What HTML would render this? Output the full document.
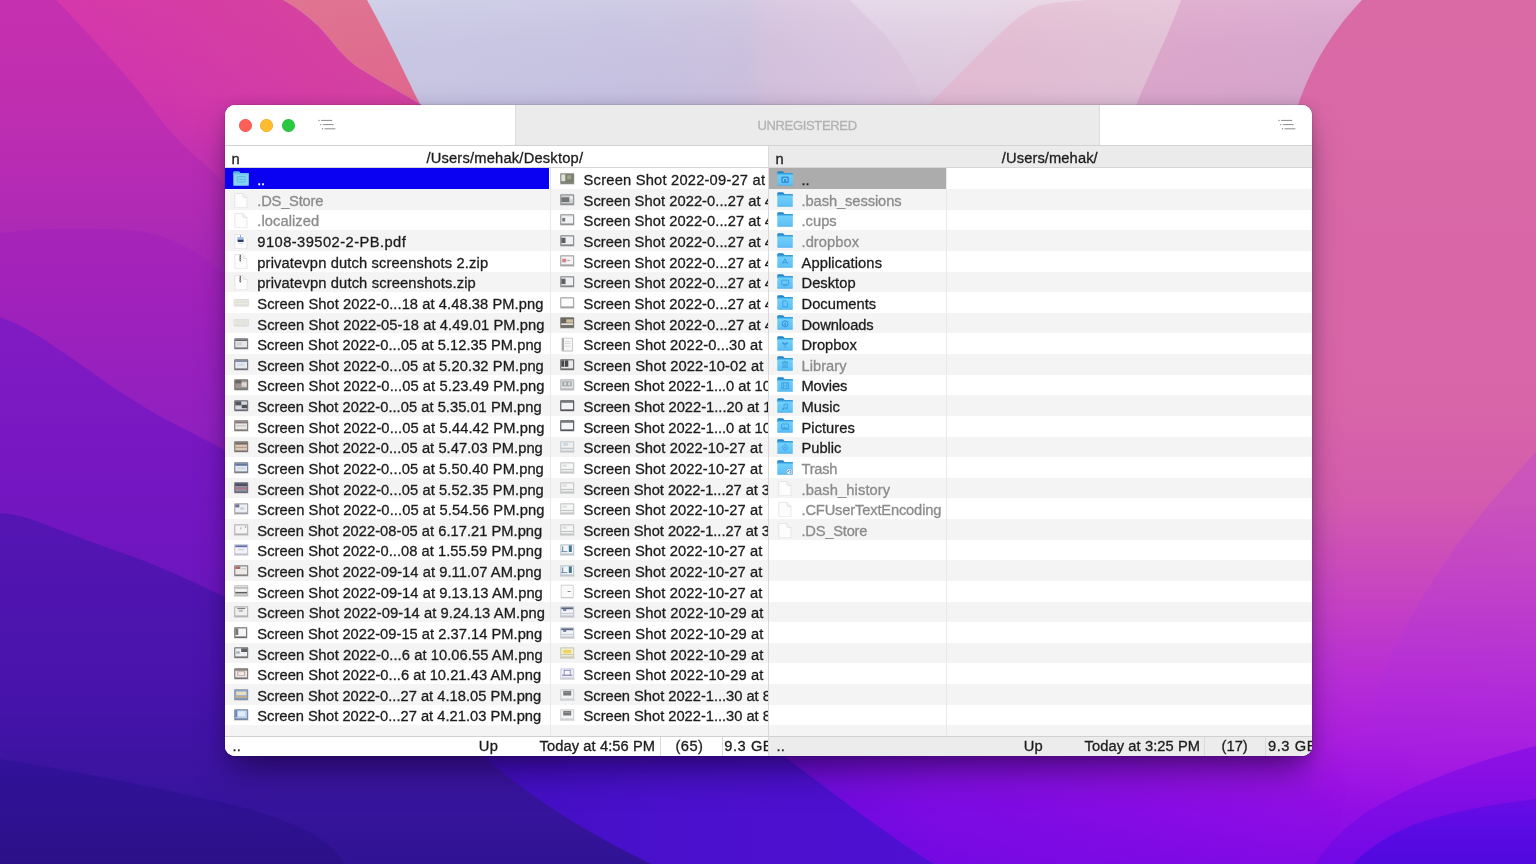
<!DOCTYPE html>
<html lang="en"><head><meta charset="utf-8"><title>Commander One</title>
<style>
html,body{margin:0;padding:0;width:1536px;height:864px;overflow:hidden;background:#7a1cc2}
body{position:relative;font-family:"Liberation Sans", "DejaVu Sans", sans-serif;font-size:14.7px;color:#1c1c1c;-webkit-font-smoothing:antialiased;-webkit-text-stroke:0.3px}
#wall{position:absolute;left:0;top:0;width:1536px;height:864px;display:block}
#win{position:absolute;left:225px;top:104.8px;width:1086.6px;height:651.4px;border-radius:10px;background:#fff;
 box-shadow:0 0 0 0.5px rgba(0,0,0,.14),0 3px 14px rgba(30,0,40,.22),0 22px 34px -8px rgba(15,0,45,.50)}
#clip{position:absolute;left:0;top:0;width:100%;height:100%;border-radius:10px;overflow:hidden;will-change:transform}
#tbar{position:absolute;left:0;top:0;width:100%;height:41px;background:#fff;border-bottom:1px solid #d2d2d2;box-sizing:border-box}
#tmid{position:absolute;left:289.5px;top:0;width:585.8px;height:40px;background:#ebebeb;border-left:1px solid #dcdcdc;border-right:1px solid #dcdcdc;box-sizing:border-box}
#ttl{position:absolute;left:0;top:-0.5px;width:100%;height:40px;line-height:41px;text-align:center;font-size:13px;color:#b2b2b2;letter-spacing:-0.33px;text-indent:-0.6px}
.tl{position:absolute;top:14px;width:13px;height:13px;border-radius:50%}
.pane{position:absolute;top:41px;height:610.4px;overflow:hidden;background:#fff}
#pl{left:0;width:542.6px}
#pr{left:544px;width:542.6px}
#pdiv{position:absolute;left:542.6px;top:41px;width:1.4px;height:610.4px;background:#d9d9d9}
.path{position:absolute;left:0;top:0;width:100%;height:22.4px;border-bottom:1px solid #d6d6d6;box-sizing:border-box;line-height:22px}
.path .n{position:absolute;left:6.6px;top:1.6px}
.path .p{position:absolute;left:17px;right:0;top:1.3px;text-align:center}
.list{position:absolute;left:0;top:-41px;width:100%;height:651.4px}
.st{position:absolute;left:0;width:100%;background:#f4f4f5}
.c{position:absolute;height:20.62px;line-height:20.62px;white-space:pre;padding-top:1.75px;box-sizing:border-box}
.d{color:#8b8b8b}
.s{color:#fff}
.ic{position:absolute;width:16px;height:15px;overflow:visible}
.col{position:absolute;top:22.4px;bottom:20.6px;overflow:hidden}
.vsep{position:absolute;top:22.4px;bottom:20.6px;width:1px;background:#e9e9e9}
.status{position:absolute;left:0;bottom:0;width:100%;height:20.8px;border-top:1px solid #d0d0d0;box-sizing:border-box;line-height:19px;white-space:pre}
.status span{position:absolute;top:0}
.status i{position:absolute;top:0;width:1px;height:100%;background:#dadada}
</style></head><body>
<svg id="wall" width="1536" height="864" viewBox="0 0 1536 864" preserveAspectRatio="none">
<defs>
<linearGradient id="gSky" gradientUnits="userSpaceOnUse" x1="0" y1="0" x2="1536" y2="0">
 <stop offset="0.24" stop-color="#cbcbe6"/><stop offset="0.40" stop-color="#c9c6e3"/><stop offset="0.485" stop-color="#cdc4e0"/>
 <stop offset="0.50" stop-color="#d6c4de"/><stop offset="0.56" stop-color="#dcc8e0"/><stop offset="0.62" stop-color="#e0cadd"/><stop offset="0.70" stop-color="#e4c2d6"/><stop offset="0.80" stop-color="#e2b4d0"/>
</linearGradient>
<linearGradient id="gSkyV" gradientUnits="userSpaceOnUse" x1="0" y1="0" x2="0" y2="130">
 <stop offset="0" stop-color="#ffffff" stop-opacity="0.10"/><stop offset="0.6" stop-color="#8060a0" stop-opacity="0.04"/><stop offset="1" stop-color="#8060a0" stop-opacity="0.16"/>
</linearGradient>
<linearGradient id="gWedge" x1="0" y1="0" x2="0" y2="1"><stop offset="0" stop-color="#e8deec" stop-opacity="0.62"/><stop offset="0.6" stop-color="#e4d6e8" stop-opacity="0.42"/><stop offset="1" stop-color="#e0cde2" stop-opacity="0.12"/></linearGradient>
<linearGradient id="gLP" x1="0" y1="0" x2="1" y2="0.3"><stop offset="0" stop-color="#e6bcd2"/><stop offset="1" stop-color="#e4c4d8"/></linearGradient>
<linearGradient id="gMP" x1="0" y1="0" x2="1" y2="0.2"><stop offset="0" stop-color="#dfa9cb"/><stop offset="1" stop-color="#d9a6ce"/></linearGradient>
<linearGradient id="gHot" gradientUnits="userSpaceOnUse" x1="0" y1="0" x2="0" y2="864">
 <stop offset="0" stop-color="#d96aa6"/><stop offset="0.47" stop-color="#d865a8"/><stop offset="0.58" stop-color="#d45bae"/>
 <stop offset="0.68" stop-color="#c845c0"/><stop offset="0.78" stop-color="#b82ed4"/><stop offset="0.87" stop-color="#a81be0"/><stop offset="0.93" stop-color="#960fe4"/><stop offset="1" stop-color="#860be5"/>
</linearGradient>
<linearGradient id="gRidgeR" gradientUnits="userSpaceOnUse" x1="1536" y1="452" x2="1340" y2="800">
 <stop offset="0" stop-color="#b040e0" stop-opacity="0.30"/><stop offset="1" stop-color="#a020e8" stop-opacity="0.10"/>
</linearGradient>
<linearGradient id="gSalmon" x1="0" y1="0" x2="0.3" y2="1"><stop offset="0" stop-color="#df7591"/><stop offset="1" stop-color="#e0648d"/></linearGradient>
<linearGradient id="gBo" gradientUnits="userSpaceOnUse" x1="340" y1="0" x2="200" y2="150"><stop offset="0" stop-color="#d8588a" stop-opacity="0.42"/><stop offset="0.5" stop-color="#d8508c" stop-opacity="0.22"/><stop offset="1" stop-color="#d8508c" stop-opacity="0"/></linearGradient>
<linearGradient id="gB" gradientUnits="userSpaceOnUse" x1="0" y1="0" x2="0" y2="700">
 <stop offset="0" stop-color="#d537ab"/><stop offset="0.13" stop-color="#d136ac"/><stop offset="0.27" stop-color="#be30b2"/><stop offset="0.42" stop-color="#a327b9"/><stop offset="0.55" stop-color="#9022bf"/><stop offset="1" stop-color="#7a1cc2"/>
</linearGradient>
<linearGradient id="gA" gradientUnits="userSpaceOnUse" x1="0" y1="0" x2="0" y2="700">
 <stop offset="0" stop-color="#c530af"/><stop offset="0.14" stop-color="#c02eb0"/><stop offset="0.28" stop-color="#b32bb4"/><stop offset="0.42" stop-color="#a126b9"/><stop offset="0.55" stop-color="#9022bf"/><stop offset="1" stop-color="#7a1cc2"/>
</linearGradient>
<linearGradient id="gW2" gradientUnits="userSpaceOnUse" x1="0" y1="228" x2="0" y2="520"><stop offset="0" stop-color="#a824b8"/><stop offset="0.3" stop-color="#9e21bc"/><stop offset="0.65" stop-color="#9220bf"/><stop offset="1" stop-color="#841ec1"/></linearGradient>
<linearGradient id="gV" gradientUnits="userSpaceOnUse" x1="0" y1="316" x2="0" y2="620"><stop offset="0" stop-color="#821bc3"/><stop offset="0.5" stop-color="#7617c2"/><stop offset="1" stop-color="#6a15be"/></linearGradient>
<linearGradient id="gI" gradientUnits="userSpaceOnUse" x1="0" y1="513" x2="0" y2="864"><stop offset="0" stop-color="#5515b4"/><stop offset="0.5" stop-color="#4813ab"/><stop offset="0.8" stop-color="#38149e"/><stop offset="1" stop-color="#301394"/></linearGradient>
<linearGradient id="gI2" x1="0" y1="0" x2="0" y2="1"><stop offset="0" stop-color="#32129a"/><stop offset="1" stop-color="#2a1088"/></linearGradient>
<linearGradient id="gBV" gradientUnits="userSpaceOnUse" x1="470" y1="0" x2="960" y2="0"><stop offset="0" stop-color="#420fc2"/><stop offset="0.4" stop-color="#4a10cc"/><stop offset="1" stop-color="#5010d2"/></linearGradient>
<linearGradient id="gBlueOv" gradientUnits="userSpaceOnUse" x1="768" y1="0" x2="1420" y2="0">
 <stop offset="0" stop-color="#4c06d8" stop-opacity="0.62"/><stop offset="0.25" stop-color="#5e06e0" stop-opacity="0.46"/><stop offset="0.6" stop-color="#6c06e4" stop-opacity="0.32"/><stop offset="1" stop-color="#6c06e4" stop-opacity="0"/>
</linearGradient>
<linearGradient id="gCorner" x1="0" y1="0" x2="0" y2="1"><stop offset="0" stop-color="#6a0ce4"/><stop offset="0.5" stop-color="#5a0ae4"/><stop offset="1" stop-color="#5208e0"/></linearGradient>
<linearGradient id="gCorner0" x1="0" y1="0" x2="0" y2="1"><stop offset="0" stop-color="#8c10e4"/><stop offset="1" stop-color="#7008e6"/></linearGradient>
<linearGradient id="gFade" gradientUnits="userSpaceOnUse" x1="0" y1="745" x2="0" y2="810"><stop offset="0" stop-color="#fff" stop-opacity="0"/><stop offset="1" stop-color="#fff" stop-opacity="1"/></linearGradient>
<mask id="mFade" maskUnits="userSpaceOnUse" x="1300" y="730" width="200" height="140"><rect x="1300" y="730" width="200" height="140" fill="url(#gFade)"/></mask>
</defs>
<!-- sky -->
<rect width="1536" height="864" fill="url(#gSky)"/>
<path d="M850 0 C862 12 875 25 887 37 C905 60 918 85 930 112 L940 112 C962 80 985 50 1037 6 L1090 0Z" fill="url(#gWedge)"/>
<path d="M1090 0 L1190 0 L1140 130 L905 130 C935 98 962 72 985 48 C1003 30 1020 14 1037 6 C1055 2 1075 1 1090 0Z" fill="url(#gLP)"/>
<path d="M1181 0 C1170 30 1158 55 1146 82 C1140 95 1136 104 1130 130 L1420 130 L1420 0Z" fill="url(#gMP)"/>
<rect width="1536" height="130" fill="url(#gSkyV)"/>
<!-- hot pink right + bottom violet base -->
<path d="M1362 0 C1337 26 1313 60 1297 108 C1280 150 1270 200 1262 260 L1262 740 L760 740 L760 864 L1536 864 L1536 0Z" fill="url(#gHot)"/>
<path d="M1536 452 C1500 490 1476 520 1457 545 C1436 575 1418 604 1403 631 C1384 668 1366 720 1350 776 L1330 864 L1536 864Z" fill="url(#gRidgeR)"/>
<rect x="760" y="740" width="551" height="124" fill="url(#gBlueOv)"/>
<rect x="1311" y="740" width="149" height="124" fill="url(#gBlueOv)" mask="url(#mFade)"/>
<!-- salmon ridge -->
<path d="M283 0 C305 12 320 26 333 43 C345 58 355 66 367 73 C385 84 402 93 420 104 L470 140 L438 140 C430 125 424 112 420 104 C410 85 392 45 367 0Z" fill="url(#gSalmon)"/>
<!-- bright magenta B -->
<path d="M0 0 L283 0 C305 12 320 26 333 43 C345 58 355 66 367 73 C385 84 402 93 420 104 L470 140 L520 200 L520 700 L0 700Z" fill="url(#gB)"/>
<path d="M0 0 L283 0 C305 12 320 26 333 43 C345 58 355 66 367 73 C385 84 402 93 420 104 L470 140 L470 260 L0 260Z" fill="url(#gBo)"/>
<!-- darker magenta A -->
<path d="M0 0 L56 0 C68 12 79 24 90 36 C100 47 110 58 120 69 C129 79 137 89 145 99 C153 110 161 120 169 130 C177 139 185 147 193 154 C201 161 209 168 217 175 C222 181 226 188 230 196 L300 260 L300 700 L0 700Z" fill="url(#gA)"/>
<!-- faint wave -->
<path d="M0 233 C28 229 56 228 83 228.5 C103 229 122 229 139 231 C154 233 168 238 180 244 C196 252 210 262 222 272 L260 300 L260 520 L0 520Z" fill="url(#gW2)"/>
<!-- violet -->
<path d="M0 317 C20 324 38 335 55 347 C75 360 93 373 111 386 C130 398 148 410 167 420 C186 430 206 440 225 450 L300 480 L300 700 L0 700Z" fill="url(#gV)"/>
<!-- indigo -->
<path d="M0 513 C18 514 34 520 49 526 C85 540 115 550 147 562 C175 573 200 585 225 597 L500 700 L700 864 L0 864Z" fill="url(#gI)"/>
<!-- bottom band -->
<path d="M476 750 C520 790 580 830 651 864 L960 864 L960 750Z" fill="url(#gBV)"/>
<path d="M776 750 C830 790 880 830 934 864 L1000 864 L1000 750Z" fill="url(#gHot)"/>
<path d="M776 750 C830 790 880 830 934 864 L1000 864 L1000 750Z" fill="url(#gBlueOv)"/>
<!-- darker indigo bottom-left -->
<path d="M0 759 C60 768 140 784 225 803 C262 812 290 822 310 832 C326 842 338 852 345 864 L0 864Z" fill="url(#gI2)"/>
<!-- bottom right corner -->
<path d="M1536 746 C1495 756 1460 768 1431 780 C1405 790 1388 800 1368 811 C1345 826 1328 844 1315 864 L1536 864Z" fill="url(#gCorner0)" opacity="0.9"/>
<path d="M1536 799 C1490 804 1450 812 1415 824 C1390 834 1368 848 1353 864 L1536 864Z" fill="url(#gCorner)"/>
</svg>

<svg width="0" height="0" style="position:absolute"><defs><linearGradient id="fg" x1="0" y1="0" x2="0" y2="1"><stop offset="0" stop-color="#72d2fc"/><stop offset="0.85" stop-color="#5fc1f6"/><stop offset="1" stop-color="#4daeea"/></linearGradient><symbol id="i-f" viewBox="0 0 16 15"><path d="M0.3 1.2 Q0.3 0.2 1.3 0.2 H5.6 Q6.3 0.2 6.8 0.9 L7.6 2.1 H14.9 Q15.8 2.1 15.8 3 V4 H0.3Z" fill="#1f86c8"/><path d="M0.3 2.6 H15.8 V13.9 Q15.8 14.8 14.9 14.8 H1.2 Q0.3 14.8 0.3 13.9Z" fill="url(#fg)"/><rect x="0.3" y="2.4" width="15.5" height="1.0" fill="#2c93d5"/></symbol><symbol id="i-up" viewBox="0 0 16 15"><path d="M0.3 1.2 Q0.3 0.2 1.3 0.2 H5.6 Q6.3 0.2 6.8 0.9 L7.6 2.1 H14.9 Q15.8 2.1 15.8 3 V4 H0.3Z" fill="#5ab4e6"/><path d="M0.3 2.6 H15.8 V13.9 Q15.8 14.8 14.9 14.8 H1.2 Q0.3 14.8 0.3 13.9Z" fill="#86d4f2"/><rect x="0.3" y="2.4" width="15.5" height="1.0" fill="#63bce9"/><rect x="4.2" y="5.6" width="7.8" height="5.4" rx="0.8" fill="none" stroke="#5cb3e2" stroke-width="1"/><rect x="5.6" y="8" width="4.8" height="1" fill="#5cb3e2"/></symbol><symbol id="i-fhome" viewBox="0 0 16 15"><path d="M0.3 1.2 Q0.3 0.2 1.3 0.2 H5.6 Q6.3 0.2 6.8 0.9 L7.6 2.1 H14.9 Q15.8 2.1 15.8 3 V4 H0.3Z" fill="#1f86c8"/><path d="M0.3 2.6 H15.8 V13.9 Q15.8 14.8 14.9 14.8 H1.2 Q0.3 14.8 0.3 13.9Z" fill="url(#fg)"/><rect x="0.3" y="2.4" width="15.5" height="1.0" fill="#2c93d5"/><rect x="4.4" y="5.4" width="7.4" height="6.6" rx="1" fill="#2f8fdb"/><path d="M6.3 10.6 V8.2 Q8.1 6.4 9.9 8.2 V10.6" fill="none" stroke="#8ad4fa" stroke-width="1.1"/></symbol><symbol id="i-fA" viewBox="0 0 16 15"><path d="M0.3 1.2 Q0.3 0.2 1.3 0.2 H5.6 Q6.3 0.2 6.8 0.9 L7.6 2.1 H14.9 Q15.8 2.1 15.8 3 V4 H0.3Z" fill="#1f86c8"/><path d="M0.3 2.6 H15.8 V13.9 Q15.8 14.8 14.9 14.8 H1.2 Q0.3 14.8 0.3 13.9Z" fill="url(#fg)"/><rect x="0.3" y="2.4" width="15.5" height="1.0" fill="#2c93d5"/><path d="M8 5.8 L5.4 11 M8 5.8 L10.6 11 M5.6 9.6 H10.4" stroke="#3a9ee0" stroke-width="1" fill="none"/></symbol><symbol id="i-fD" viewBox="0 0 16 15"><path d="M0.3 1.2 Q0.3 0.2 1.3 0.2 H5.6 Q6.3 0.2 6.8 0.9 L7.6 2.1 H14.9 Q15.8 2.1 15.8 3 V4 H0.3Z" fill="#1f86c8"/><path d="M0.3 2.6 H15.8 V13.9 Q15.8 14.8 14.9 14.8 H1.2 Q0.3 14.8 0.3 13.9Z" fill="url(#fg)"/><rect x="0.3" y="2.4" width="15.5" height="1.0" fill="#2c93d5"/><rect x="4.6" y="6.2" width="7" height="4.4" rx="0.6" fill="none" stroke="#3a9ee0" stroke-width="0.9"/><rect x="6" y="11.3" width="4.2" height="0.8" fill="#3a9ee0"/></symbol><symbol id="i-fDoc" viewBox="0 0 16 15"><path d="M0.3 1.2 Q0.3 0.2 1.3 0.2 H5.6 Q6.3 0.2 6.8 0.9 L7.6 2.1 H14.9 Q15.8 2.1 15.8 3 V4 H0.3Z" fill="#1f86c8"/><path d="M0.3 2.6 H15.8 V13.9 Q15.8 14.8 14.9 14.8 H1.2 Q0.3 14.8 0.3 13.9Z" fill="url(#fg)"/><rect x="0.3" y="2.4" width="15.5" height="1.0" fill="#2c93d5"/><path d="M5.8 5.8 H9 L10.6 7.4 V11.8 H5.8Z" fill="none" stroke="#3a9ee0" stroke-width="0.9"/></symbol><symbol id="i-fDl" viewBox="0 0 16 15"><path d="M0.3 1.2 Q0.3 0.2 1.3 0.2 H5.6 Q6.3 0.2 6.8 0.9 L7.6 2.1 H14.9 Q15.8 2.1 15.8 3 V4 H0.3Z" fill="#1f86c8"/><path d="M0.3 2.6 H15.8 V13.9 Q15.8 14.8 14.9 14.8 H1.2 Q0.3 14.8 0.3 13.9Z" fill="url(#fg)"/><rect x="0.3" y="2.4" width="15.5" height="1.0" fill="#2c93d5"/><circle cx="8.1" cy="8.8" r="3" fill="none" stroke="#2f8fdb" stroke-width="1"/><path d="M8.1 7.2 V10.2 M6.9 9.2 L8.1 10.4 L9.3 9.2" stroke="#2f8fdb" stroke-width="0.9" fill="none"/></symbol><symbol id="i-fDb" viewBox="0 0 16 15"><path d="M0.3 1.2 Q0.3 0.2 1.3 0.2 H5.6 Q6.3 0.2 6.8 0.9 L7.6 2.1 H14.9 Q15.8 2.1 15.8 3 V4 H0.3Z" fill="#1f86c8"/><path d="M0.3 2.6 H15.8 V13.9 Q15.8 14.8 14.9 14.8 H1.2 Q0.3 14.8 0.3 13.9Z" fill="url(#fg)"/><rect x="0.3" y="2.4" width="15.5" height="1.0" fill="#2c93d5"/><path d="M6.2 6 L8.1 7.2 L10 6 L11.6 7.2 L8.1 9.6 L4.6 7.2Z M6.4 10.4 L8.1 11.6 L9.8 10.4" fill="#3a9ee0" stroke="none"/></symbol><symbol id="i-fL" viewBox="0 0 16 15"><path d="M0.3 1.2 Q0.3 0.2 1.3 0.2 H5.6 Q6.3 0.2 6.8 0.9 L7.6 2.1 H14.9 Q15.8 2.1 15.8 3 V4 H0.3Z" fill="#1f86c8"/><path d="M0.3 2.6 H15.8 V13.9 Q15.8 14.8 14.9 14.8 H1.2 Q0.3 14.8 0.3 13.9Z" fill="url(#fg)"/><rect x="0.3" y="2.4" width="15.5" height="1.0" fill="#2c93d5"/><path d="M5 11.6 H11.2 M5.6 10.2 H10.6 M6 7 V10 M8.1 7 V10 M10.2 7 V10 M5 6.6 L8.1 5.2 L11.2 6.6Z" stroke="#3a9ee0" stroke-width="0.8" fill="none"/></symbol><symbol id="i-fM" viewBox="0 0 16 15"><path d="M0.3 1.2 Q0.3 0.2 1.3 0.2 H5.6 Q6.3 0.2 6.8 0.9 L7.6 2.1 H14.9 Q15.8 2.1 15.8 3 V4 H0.3Z" fill="#1f86c8"/><path d="M0.3 2.6 H15.8 V13.9 Q15.8 14.8 14.9 14.8 H1.2 Q0.3 14.8 0.3 13.9Z" fill="url(#fg)"/><rect x="0.3" y="2.4" width="15.5" height="1.0" fill="#2c93d5"/><rect x="4.8" y="5.8" width="6.6" height="6" fill="none" stroke="#3a9ee0" stroke-width="0.9"/><path d="M6.4 5.8 V11.8 M9.8 5.8 V11.8 M6.4 8.8 H9.8" stroke="#3a9ee0" stroke-width="0.8"/></symbol><symbol id="i-fMu" viewBox="0 0 16 15"><path d="M0.3 1.2 Q0.3 0.2 1.3 0.2 H5.6 Q6.3 0.2 6.8 0.9 L7.6 2.1 H14.9 Q15.8 2.1 15.8 3 V4 H0.3Z" fill="#1f86c8"/><path d="M0.3 2.6 H15.8 V13.9 Q15.8 14.8 14.9 14.8 H1.2 Q0.3 14.8 0.3 13.9Z" fill="url(#fg)"/><rect x="0.3" y="2.4" width="15.5" height="1.0" fill="#2c93d5"/><path d="M7 11 V6.4 L10.4 5.8 V10.2" fill="none" stroke="#3a9ee0" stroke-width="0.9"/><circle cx="6.2" cy="11" r="1.1" fill="#3a9ee0"/><circle cx="9.6" cy="10.3" r="1.1" fill="#3a9ee0"/></symbol><symbol id="i-fP" viewBox="0 0 16 15"><path d="M0.3 1.2 Q0.3 0.2 1.3 0.2 H5.6 Q6.3 0.2 6.8 0.9 L7.6 2.1 H14.9 Q15.8 2.1 15.8 3 V4 H0.3Z" fill="#1f86c8"/><path d="M0.3 2.6 H15.8 V13.9 Q15.8 14.8 14.9 14.8 H1.2 Q0.3 14.8 0.3 13.9Z" fill="url(#fg)"/><rect x="0.3" y="2.4" width="15.5" height="1.0" fill="#2c93d5"/><rect x="4.6" y="6" width="7" height="5.4" rx="0.6" fill="none" stroke="#3a9ee0" stroke-width="0.9"/><path d="M5 10.8 L7.2 8.4 L8.8 10 L9.8 9.2 L11.2 10.8Z" fill="#3a9ee0"/></symbol><symbol id="i-fPu" viewBox="0 0 16 15"><path d="M0.3 1.2 Q0.3 0.2 1.3 0.2 H5.6 Q6.3 0.2 6.8 0.9 L7.6 2.1 H14.9 Q15.8 2.1 15.8 3 V4 H0.3Z" fill="#1f86c8"/><path d="M0.3 2.6 H15.8 V13.9 Q15.8 14.8 14.9 14.8 H1.2 Q0.3 14.8 0.3 13.9Z" fill="url(#fg)"/><rect x="0.3" y="2.4" width="15.5" height="1.0" fill="#2c93d5"/><path d="M8.1 5.4 L11 8.6 L8.1 11.8 L5.2 8.6Z" fill="none" stroke="#3a9ee0" stroke-width="0.9"/><circle cx="8.1" cy="8.6" r="0.9" fill="#3a9ee0"/></symbol><symbol id="i-fT" viewBox="0 0 16 15"><path d="M0.3 1.2 Q0.3 0.2 1.3 0.2 H5.6 Q6.3 0.2 6.8 0.9 L7.6 2.1 H14.9 Q15.8 2.1 15.8 3 V4 H0.3Z" fill="#1f86c8"/><path d="M0.3 2.6 H15.8 V13.9 Q15.8 14.8 14.9 14.8 H1.2 Q0.3 14.8 0.3 13.9Z" fill="url(#fg)"/><rect x="0.3" y="2.4" width="15.5" height="1.0" fill="#2c93d5"/><circle cx="12.4" cy="11.6" r="3.1" fill="#f3f6fa" stroke="#2f8fdb" stroke-width="0.5"/><path d="M11 11.6 a1.5 1.5 0 1 1 1.5 1.5" fill="none" stroke="#4a7fb5" stroke-width="0.9"/><path d="M10.2 11 L11 12.2 L11.9 11Z" fill="#4a7fb5"/></symbol><symbol id="i-doc" viewBox="0 0 16 15"><path d="M1.8 0.5 H10 L14 4.5 V14.1 Q14 14.8 13.3 14.8 H2.5 Q1.8 14.8 1.8 14.1Z" fill="#fdfdfd" stroke="#dedede" stroke-width="0.7"/><path d="M10 0.5 V3.7 Q10 4.5 10.8 4.5 H14" fill="#f1f1f1" stroke="#d9d9d9" stroke-width="0.6"/></symbol><symbol id="i-pdf" viewBox="0 0 16 15"><path d="M1.8 0.5 H10 L14 4.5 V14.1 Q14 14.8 13.3 14.8 H2.5 Q1.8 14.8 1.8 14.1Z" fill="#fdfdfd" stroke="#dcdcdc" stroke-width="0.7"/><rect x="4.2" y="3" width="6.6" height="2.6" fill="#9fc0ea"/><rect x="4.6" y="5.6" width="6" height="2.4" fill="#2c3d66"/><rect x="7" y="1.2" width="1" height="2" fill="#7a9fd8"/><rect x="5" y="9" width="5" height="0.8" fill="#cfd6e4"/></symbol><symbol id="i-zip" viewBox="0 0 16 15"><path d="M1.8 0.5 H10 L14 4.5 V14.1 Q14 14.8 13.3 14.8 H2.5 Q1.8 14.8 1.8 14.1Z" fill="#fdfdfd" stroke="#dcdcdc" stroke-width="0.7"/><path d="M10 0.5 V3.7 Q10 4.5 10.8 4.5 H14" fill="#f1f1f1" stroke="#d9d9d9" stroke-width="0.6"/><rect x="6.6" y="0.8" width="1.4" height="6.6" fill="#6d6d6d"/><rect x="6.3" y="3" width="2" height="1" fill="#9a9a9a"/><rect x="6.3" y="5" width="2" height="1" fill="#9a9a9a"/></symbol><symbol id="i-t0" viewBox="0 0 16 15"><rect x="0.6" y="3.0" width="15.2" height="7.4" fill="#d3d3d1" rx="1"/><rect x="1.1" y="3.5" width="14.2" height="6" fill="#ecebe6"/><rect x="1.8" y="4.6" width="12.8" height="0.7" fill="#dad8d0"/><rect x="1.8" y="6.4" width="12.8" height="0.7" fill="#dad8d0"/><rect x="1.8" y="8.0" width="12.8" height="0.6" fill="#dcdad2"/></symbol><symbol id="i-t1" viewBox="0 0 16 15"><g opacity="0.82"><rect x="0.7999999999999999" y="11.3" width="14.8" height="1.4" fill="#c9c9c9" rx="0.5"/><rect x="1.2" y="1.3" width="14" height="10.6" fill="#5a5a5c" rx="0.8"/><rect x="2.3" y="2.4000000000000004" width="11.8" height="8.0" fill="#dfe1e6"/><rect x="2.3" y="2.4000000000000004" width="11.8" height="1.6" fill="#3e4046"/><rect x="3.7" y="5.3" width="5" height="3" fill="#c3c7d0"/></g></symbol><symbol id="i-t2" viewBox="0 0 16 15"><g opacity="0.82"><rect x="0.7999999999999999" y="11.3" width="14.8" height="1.4" fill="#c9c9c9" rx="0.5"/><rect x="1.2" y="1.3" width="14" height="10.6" fill="#50545c" rx="0.8"/><rect x="2.3" y="2.4000000000000004" width="11.8" height="8.0" fill="#e4e8f0"/><rect x="2.3" y="2.4000000000000004" width="11.8" height="1.4" fill="#4a5a7a"/><rect x="4.2" y="5.3" width="7" height="2.6" fill="#cfd6e2"/></g></symbol><symbol id="i-t3" viewBox="0 0 16 15"><g opacity="0.82"><rect x="0.7999999999999999" y="11.3" width="14.8" height="1.4" fill="#c9c9c9" rx="0.5"/><rect x="1.2" y="1.3" width="14" height="10.6" fill="#5a5656" rx="0.8"/><rect x="2.3" y="2.4000000000000004" width="11.8" height="8.0" fill="#8a7f7c"/><rect x="2.3" y="2.4000000000000004" width="6" height="3" fill="#4a4444"/><rect x="8.7" y="4.3" width="5" height="4.5" fill="#d8d0cc"/></g></symbol><symbol id="i-t4" viewBox="0 0 16 15"><g opacity="0.82"><rect x="0.7999999999999999" y="11.3" width="14.8" height="1.4" fill="#c9c9c9" rx="0.5"/><rect x="1.2" y="1.3" width="14" height="10.6" fill="#4c4e54" rx="0.8"/><rect x="2.3" y="2.4000000000000004" width="11.8" height="8.0" fill="#cfd4dc"/><rect x="2.3" y="2.4000000000000004" width="6" height="4" fill="#30343c"/><rect x="8.7" y="5.8" width="5.4" height="3.4" fill="#2c3038"/></g></symbol><symbol id="i-t5" viewBox="0 0 16 15"><g opacity="0.82"><rect x="0.7999999999999999" y="11.3" width="14.8" height="1.4" fill="#c9c9c9" rx="0.5"/><rect x="1.2" y="1.3" width="14" height="10.6" fill="#5c5858" rx="0.8"/><rect x="2.3" y="2.4000000000000004" width="11.8" height="8.0" fill="#e6e2e0"/><rect x="2.3" y="2.4000000000000004" width="11.8" height="2" fill="#6a5a58"/><rect x="3.2" y="6.3" width="10" height="1" fill="#b9aeaa"/></g></symbol><symbol id="i-t6" viewBox="0 0 16 15"><g opacity="0.82"><rect x="0.7999999999999999" y="11.3" width="14.8" height="1.4" fill="#c9c9c9" rx="0.5"/><rect x="1.2" y="1.3" width="14" height="10.6" fill="#5e5650" rx="0.8"/><rect x="2.3" y="2.4000000000000004" width="11.8" height="8.0" fill="#d9c4b0"/><rect x="2.3" y="2.4000000000000004" width="11.8" height="2.2" fill="#5a4a44"/><rect x="2.3" y="6.7" width="11.8" height="1.4" fill="#b08a6c"/></g></symbol><symbol id="i-t7" viewBox="0 0 16 15"><g opacity="0.82"><rect x="0.7999999999999999" y="11.3" width="14.8" height="1.4" fill="#c9c9c9" rx="0.5"/><rect x="1.2" y="1.3" width="14" height="10.6" fill="#5a6070" rx="0.8"/><rect x="2.3" y="2.4000000000000004" width="11.8" height="8.0" fill="#dfe6f0"/><rect x="2.3" y="2.4000000000000004" width="11.8" height="2.4" fill="#3f5a8c"/><rect x="4.2" y="6.3" width="8" height="2" fill="#c4cede"/></g></symbol><symbol id="i-t8" viewBox="0 0 16 15"><g opacity="0.82"><rect x="0.7999999999999999" y="11.3" width="14.8" height="1.4" fill="#c9c9c9" rx="0.5"/><rect x="1.2" y="1.3" width="14" height="10.6" fill="#4c4c58" rx="0.8"/><rect x="2.3" y="2.4000000000000004" width="11.8" height="8.0" fill="#7a7f98"/><rect x="2.3" y="2.4000000000000004" width="11.8" height="2.6" fill="#2a2c48"/><rect x="2.3" y="6.3" width="11.8" height="2" fill="#a05a6a"/></g></symbol><symbol id="i-t9" viewBox="0 0 16 15"><g opacity="0.82"><rect x="0.7999999999999999" y="11.3" width="14.8" height="1.4" fill="#c9c9c9" rx="0.5"/><rect x="1.2" y="1.3" width="14" height="10.6" fill="#8a8e96" rx="0.8"/><rect x="2.3" y="2.4000000000000004" width="11.8" height="8.0" fill="#e9edf2"/><rect x="2.3" y="2.4000000000000004" width="4" height="3" fill="#4a5568"/><rect x="7.2" y="5.5" width="4" height="2" fill="#b8c0cc"/></g></symbol><symbol id="i-t10" viewBox="0 0 16 15"><g opacity="0.82"><rect x="0.7999999999999999" y="11.3" width="14.8" height="1.4" fill="#c9c9c9" rx="0.5"/><rect x="1.2" y="1.3" width="14" height="10.6" fill="#a8a8aa" rx="0.8"/><rect x="2.3" y="2.4000000000000004" width="11.8" height="8.0" fill="#f4f4f4"/><rect x="7.2" y="4.3" width="1.2" height="2" fill="#9a9a9a"/><rect x="11.799999999999999" y="3.3" width="1.4" height="1.4" fill="#8a8a8a"/></g></symbol><symbol id="i-t11" viewBox="0 0 16 15"><g opacity="0.82"><rect x="0.7999999999999999" y="11.3" width="14.8" height="1.4" fill="#c9c9c9" rx="0.5"/><rect x="1.2" y="1.3" width="14" height="10.6" fill="#b4b8c4" rx="0.8"/><rect x="2.3" y="2.4000000000000004" width="11.8" height="8.0" fill="#f0f2f8"/><rect x="2.3" y="2.4000000000000004" width="11.8" height="1.8" fill="#3a4a9a"/><rect x="5.2" y="5.7" width="6" height="1.6" fill="#c8cce0"/></g></symbol><symbol id="i-t12" viewBox="0 0 16 15"><g opacity="0.82"><rect x="0.7999999999999999" y="11.3" width="14.8" height="1.4" fill="#c9c9c9" rx="0.5"/><rect x="1.2" y="1.3" width="14" height="10.6" fill="#6a6668" rx="0.8"/><rect x="2.3" y="2.4000000000000004" width="11.8" height="8.0" fill="#ece8e6"/><rect x="2.3" y="2.4000000000000004" width="5" height="2.6" fill="#a04a44"/><rect x="8.2" y="4.3" width="5" height="1" fill="#bdb6b4"/></g></symbol><symbol id="i-t13" viewBox="0 0 16 15"><g opacity="0.82"><rect x="0.7999999999999999" y="11.3" width="14.8" height="1.4" fill="#c9c9c9" rx="0.5"/><rect x="1.2" y="1.3" width="14" height="10.6" fill="#b0b0b0" rx="0.8"/><rect x="2.3" y="2.4000000000000004" width="11.8" height="8.0" fill="#f2f2f2"/><rect x="2.3" y="3.5" width="11.8" height="0.9" fill="#6a6a6a"/><rect x="2.3" y="7.8999999999999995" width="11.8" height="1.6" fill="#3c3c3c"/></g></symbol><symbol id="i-t14" viewBox="0 0 16 15"><g opacity="0.82"><rect x="0.7999999999999999" y="11.3" width="14.8" height="1.4" fill="#c9c9c9" rx="0.5"/><rect x="1.2" y="1.3" width="14" height="10.6" fill="#a4a4a6" rx="0.8"/><rect x="2.3" y="2.4000000000000004" width="11.8" height="8.0" fill="#f0f0f0"/><rect x="4.2" y="2.9000000000000004" width="8" height="1.2" fill="#6a6a6a"/><rect x="5.8" y="4.9" width="4" height="2" fill="#b0a8a4"/></g></symbol><symbol id="i-t15" viewBox="0 0 16 15"><g opacity="0.82"><rect x="0.7999999999999999" y="11.3" width="13.8" height="1.4" fill="#c9c9c9" rx="0.5"/><rect x="1.2" y="1.3" width="13" height="10.6" fill="#4e4e50" rx="0.8"/><rect x="2.3" y="2.4000000000000004" width="10.8" height="8.0" fill="#f4f4f4"/><rect x="2.3" y="2.4000000000000004" width="3" height="6.6" fill="#5a5a5c"/></g></symbol><symbol id="i-t16" viewBox="0 0 16 15"><g opacity="0.82"><rect x="0.7999999999999999" y="11.3" width="14.8" height="1.4" fill="#c9c9c9" rx="0.5"/><rect x="1.2" y="1.3" width="14" height="10.6" fill="#55575c" rx="0.8"/><rect x="2.3" y="2.4000000000000004" width="11.8" height="8.0" fill="#eceef2"/><rect x="8.2" y="2.4000000000000004" width="5.9" height="3.6" fill="#3a3c42"/><rect x="3.2" y="5.3" width="3.6" height="2.4" fill="#9aa0aa"/></g></symbol><symbol id="i-t17" viewBox="0 0 16 15"><g opacity="0.82"><rect x="0.7999999999999999" y="11.3" width="14.8" height="1.4" fill="#c9c9c9" rx="0.5"/><rect x="1.2" y="1.3" width="14" height="10.6" fill="#5c5454" rx="0.8"/><rect x="2.3" y="2.4000000000000004" width="11.8" height="8.0" fill="#e9e4e2"/><rect x="2.3" y="2.4000000000000004" width="11.8" height="1.2" fill="#4a4040"/><rect x="4.2" y="4.3" width="8" height="4.6" fill="#b89a90"/><rect x="5.4" y="5.1" width="5.6" height="3" fill="#efe8e4"/></g></symbol><symbol id="i-t18" viewBox="0 0 16 15"><g opacity="0.82"><rect x="0.7999999999999999" y="11.3" width="14.8" height="1.4" fill="#c9c9c9" rx="0.5"/><rect x="1.2" y="1.3" width="14" height="10.6" fill="#6a7890" rx="0.8"/><rect x="2.3" y="2.4000000000000004" width="11.8" height="8.0" fill="#7fa8d8"/><rect x="3.2" y="3.7" width="10" height="3.4" fill="#e8d8b0"/><rect x="2.3" y="7.8999999999999995" width="11.8" height="1.4" fill="#c89a58"/></g></symbol><symbol id="i-t19" viewBox="0 0 16 15"><g opacity="0.82"><rect x="0.7999999999999999" y="11.3" width="14.8" height="1.4" fill="#c9c9c9" rx="0.5"/><rect x="1.2" y="1.3" width="14" height="10.6" fill="#5a6a8a" rx="0.8"/><rect x="2.3" y="2.4000000000000004" width="11.8" height="8.0" fill="#a9c6ea"/><rect x="4.2" y="3.3" width="8" height="5" fill="#dbe8f8"/><rect x="2.3" y="2.4000000000000004" width="2" height="6.8" fill="#4a6aa0"/></g></symbol><symbol id="i-u0" viewBox="0 0 16 15"><g opacity="0.82"><rect x="0.7999999999999999" y="11.3" width="14.8" height="1.4" fill="#c9c9c9" rx="0.5"/><rect x="1.2" y="1.3" width="14" height="10.6" fill="#6a6e64" rx="0.8"/><rect x="2.3" y="2.4000000000000004" width="11.8" height="8.0" fill="#5f6450"/><rect x="2.3" y="2.4000000000000004" width="4" height="6.8" fill="#d8dad0"/><rect x="8.2" y="3.3" width="4" height="4" fill="#8a9070"/></g></symbol><symbol id="i-u1" viewBox="0 0 16 15"><g opacity="0.82"><rect x="0.7999999999999999" y="11.3" width="14.8" height="1.4" fill="#c9c9c9" rx="0.5"/><rect x="1.2" y="1.3" width="14" height="10.6" fill="#77797a" rx="0.8"/><rect x="2.3" y="2.4000000000000004" width="11.8" height="8.0" fill="#c9cbcc"/><rect x="2.3" y="4.3" width="8" height="4.8" fill="#54585a"/><rect x="10.799999999999999" y="3.3" width="3" height="3" fill="#eeeeee"/></g></symbol><symbol id="i-u2" viewBox="0 0 16 15"><g opacity="0.82"><rect x="0.7999999999999999" y="11.3" width="14.8" height="1.4" fill="#c9c9c9" rx="0.5"/><rect x="1.2" y="1.3" width="14" height="10.6" fill="#77797c" rx="0.8"/><rect x="2.3" y="2.4000000000000004" width="11.8" height="8.0" fill="#f1f2f4"/><rect x="3.2" y="4.9" width="3" height="3.6" fill="#5a5e66"/><rect x="2.3" y="2.4000000000000004" width="11.8" height="0.8" fill="#b9bcc2"/></g></symbol><symbol id="i-u3" viewBox="0 0 16 15"><g opacity="0.82"><rect x="0.7999999999999999" y="11.3" width="14.8" height="1.4" fill="#c9c9c9" rx="0.5"/><rect x="1.2" y="1.3" width="14" height="10.6" fill="#6c6e72" rx="0.8"/><rect x="2.3" y="2.4000000000000004" width="11.8" height="8.0" fill="#eef0f2"/><rect x="2.3" y="3.7" width="4.2" height="5.4" fill="#3c3f46"/></g></symbol><symbol id="i-u4" viewBox="0 0 16 15"><g opacity="0.82"><rect x="0.7999999999999999" y="11.3" width="14.8" height="1.4" fill="#c9c9c9" rx="0.5"/><rect x="1.2" y="1.3" width="14" height="10.6" fill="#8a8c90" rx="0.8"/><rect x="2.3" y="2.4000000000000004" width="11.8" height="8.0" fill="#f4f2f2"/><rect x="3.2" y="4.7" width="4" height="3.6" fill="#c86a72"/><rect x="8.2" y="5.8999999999999995" width="3" height="1.2" fill="#9a9a9a"/></g></symbol><symbol id="i-u5" viewBox="0 0 16 15"><g opacity="0.82"><rect x="0.7999999999999999" y="11.3" width="14.8" height="1.4" fill="#c9c9c9" rx="0.5"/><rect x="1.2" y="1.3" width="14" height="10.6" fill="#8c8c8e" rx="0.8"/><rect x="2.3" y="2.4000000000000004" width="11.8" height="8.0" fill="#fbfbfb"/></g></symbol><symbol id="i-u6" viewBox="0 0 16 15"><g opacity="0.82"><rect x="0.7999999999999999" y="11.3" width="14.8" height="1.4" fill="#c9c9c9" rx="0.5"/><rect x="1.2" y="1.3" width="14" height="10.6" fill="#5c5a56" rx="0.8"/><rect x="2.3" y="2.4000000000000004" width="11.8" height="8.0" fill="#4a463e"/><rect x="7.2" y="3.3" width="6.8" height="3.4" fill="#c9b48a"/><rect x="2.3" y="7.3" width="11.8" height="1.8" fill="#e4e0d8"/></g></symbol><symbol id="i-u7" viewBox="0 0 16 15"><rect x="2.6" y="0.8" width="11.2" height="13.6" fill="#b8b8b8" rx="0.6"/><rect x="3.3" y="1.5" width="9.8" height="12" fill="#f7f7f7"/><rect x="3.3" y="1.5" width="1.4" height="12" fill="#8a8a8a"/><rect x="5.6" y="4" width="6" height="0.6" fill="#c4c4c4"/><rect x="5.6" y="6.4" width="6" height="0.6" fill="#c4c4c4"/><rect x="5.6" y="8.8" width="6" height="0.6" fill="#c4c4c4"/></symbol><symbol id="i-u8" viewBox="0 0 16 15"><g opacity="0.82"><rect x="0.7999999999999999" y="11.3" width="14.8" height="1.4" fill="#c9c9c9" rx="0.5"/><rect x="1.2" y="1.3" width="14" height="10.6" fill="#4a4a4c" rx="0.8"/><rect x="2.3" y="2.4000000000000004" width="11.8" height="8.0" fill="#e8e8ea"/><rect x="2.3" y="2.4000000000000004" width="7" height="6.4" fill="#222226"/><rect x="5.2" y="2.4000000000000004" width="0.8" height="6.4" fill="#d0d0d0"/></g></symbol><symbol id="i-u9" viewBox="0 0 16 15"><g opacity="0.82"><rect x="0.7999999999999999" y="11.3" width="14.8" height="1.4" fill="#c9c9c9" rx="0.5"/><rect x="1.2" y="1.3" width="14" height="10.6" fill="#a4a6a8" rx="0.8"/><rect x="2.3" y="2.4000000000000004" width="11.8" height="8.0" fill="#dcdedf"/><rect x="3.2" y="3.3" width="9.6" height="5" fill="#909496"/><rect x="5.2" y="4.3" width="2" height="3" fill="#d8dadb"/><rect x="9.2" y="4.3" width="2" height="3" fill="#d8dadb"/></g></symbol><symbol id="i-u10" viewBox="0 0 16 15"><g opacity="0.82"><rect x="0.7999999999999999" y="11.3" width="14.8" height="1.4" fill="#c9c9c9" rx="0.5"/><rect x="1.2" y="1.3" width="14" height="10.6" fill="#2c2e34" rx="0.8"/><rect x="2.3" y="2.4000000000000004" width="11.8" height="8.0" fill="#f2f3f5"/><rect x="2.3" y="2.4000000000000004" width="11.8" height="1.2" fill="#2c2e34"/></g></symbol><symbol id="i-u11" viewBox="0 0 16 15"><g opacity="0.82"><rect x="0.7999999999999999" y="11.3" width="14.8" height="1.4" fill="#c9c9c9" rx="0.5"/><rect x="1.2" y="1.3" width="14" height="10.6" fill="#bcc0c4" rx="0.8"/><rect x="2.3" y="2.4000000000000004" width="11.8" height="8.0" fill="#eef0f2"/><rect x="4.2" y="2.9000000000000004" width="5" height="3" fill="#c6d2e0"/><rect x="2.3" y="7.7" width="11.8" height="1.4" fill="#b8bcc0"/></g></symbol><symbol id="i-u12" viewBox="0 0 16 15"><g opacity="0.82"><rect x="0.7999999999999999" y="11.3" width="14.8" height="1.4" fill="#c9c9c9" rx="0.5"/><rect x="1.2" y="1.3" width="14" height="10.6" fill="#b8babc" rx="0.8"/><rect x="2.3" y="2.4000000000000004" width="11.8" height="8.0" fill="#f6f6f6"/><rect x="3.5999999999999996" y="3.3" width="4" height="2.6" fill="#d8dade"/><rect x="2.3" y="7.8999999999999995" width="11.8" height="1.2" fill="#b4b6b8"/></g></symbol><symbol id="i-u13" viewBox="0 0 16 15"><g opacity="0.82"><rect x="0.7999999999999999" y="11.3" width="14.8" height="1.4" fill="#c9c9c9" rx="0.5"/><rect x="1.2" y="1.3" width="14" height="10.6" fill="#b0bcc8" rx="0.8"/><rect x="2.3" y="2.4000000000000004" width="11.8" height="8.0" fill="#f2f6fa"/><rect x="9.799999999999999" y="2.4000000000000004" width="3" height="6.6" fill="#1f5a78"/><rect x="3.2" y="3.3" width="1" height="5.6" fill="#3a6a88"/><rect x="2.3" y="8.1" width="6" height="1" fill="#4a7a98"/></g></symbol><symbol id="i-u14" viewBox="0 0 16 15"><rect x="1.8" y="0.8" width="12.8" height="13.4" fill="#c4c4c4" rx="1"/><rect x="2.5" y="1.5" width="11.4" height="11.6" fill="#fafafa"/><rect x="8.6" y="7" width="3" height="1" fill="#8a8a8a"/></symbol><symbol id="i-u15" viewBox="0 0 16 15"><g opacity="0.82"><rect x="0.7999999999999999" y="11.3" width="14.8" height="1.4" fill="#c9c9c9" rx="0.5"/><rect x="1.2" y="1.3" width="14" height="10.6" fill="#b4bac6" rx="0.8"/><rect x="2.3" y="2.4000000000000004" width="11.8" height="8.0" fill="#eef2f8"/><rect x="2.3" y="2.4000000000000004" width="11.8" height="1.8" fill="#3a4668"/><rect x="4.2" y="4.2" width="3" height="1.6" fill="#3a4668"/><rect x="2.3" y="7.8999999999999995" width="11.8" height="1.2" fill="#c2c6cc"/></g></symbol><symbol id="i-u16" viewBox="0 0 16 15"><g opacity="0.82"><rect x="0.7999999999999999" y="11.3" width="14.8" height="1.4" fill="#c9c9c9" rx="0.5"/><rect x="1.2" y="1.3" width="14" height="10.6" fill="#c4c0a8" rx="0.8"/><rect x="2.3" y="2.4000000000000004" width="11.8" height="8.0" fill="#f4efd0"/><rect x="4.2" y="3.9000000000000004" width="8" height="3.4" fill="#f0cf3a"/><rect x="2.3" y="8.1" width="11.8" height="1" fill="#bdb9a8"/></g></symbol><symbol id="i-u17" viewBox="0 0 16 15"><g opacity="0.82"><rect x="0.7999999999999999" y="11.3" width="14.8" height="1.4" fill="#c9c9c9" rx="0.5"/><rect x="1.2" y="1.3" width="14" height="10.6" fill="#c4c6d8" rx="0.8"/><rect x="2.3" y="2.4000000000000004" width="11.8" height="8.0" fill="#eceefa"/><rect x="5.2" y="3.3" width="6" height="4.4" fill="#f8f8fc"/><rect x="4.8" y="2.9000000000000004" width="6.8" height="0.8" fill="#5a62b0"/><rect x="4.8" y="2.9000000000000004" width="0.8" height="5" fill="#5a62b0"/><rect x="10.799999999999999" y="2.9000000000000004" width="0.8" height="5" fill="#5a62b0"/><rect x="3.2" y="7.7" width="10" height="1" fill="#4a4e88"/></g></symbol><symbol id="i-u18" viewBox="0 0 16 15"><g opacity="0.82"><rect x="0.7999999999999999" y="11.3" width="14.8" height="1.4" fill="#c9c9c9" rx="0.5"/><rect x="1.2" y="1.3" width="14" height="10.6" fill="#c6c8ca" rx="0.8"/><rect x="2.3" y="2.4000000000000004" width="11.8" height="8.0" fill="#f3f4f5"/><rect x="4.2" y="2.9000000000000004" width="8" height="4.6" fill="#5c5e62"/><rect x="5.2" y="3.9000000000000004" width="6" height="0.8" fill="#8a8c90"/></g></symbol></defs></svg>
<div id="win"><div id="clip">
 <div id="tbar">
  <div class="tl" style="left:13.8px;background:#fe5f57;box-shadow:inset 0 0 0 .5px rgba(0,0,0,.12)"></div>
  <div class="tl" style="left:35.4px;background:#febc2e;box-shadow:inset 0 0 0 .5px rgba(0,0,0,.12)"></div>
  <div class="tl" style="left:57px;background:#28c840;box-shadow:inset 0 0 0 .5px rgba(0,0,0,.12)"></div>
  <svg style="position:absolute;left:92px;top:13px" width="20" height="14" viewBox="0 0 20 14"><g stroke="#858585" stroke-width="0.95" stroke-linecap="round"><path d="M4.4 2.4H14.6M6.2 6.6H16.2M8 10.8H18"/></g><g fill="#858585"><circle cx="1.9" cy="2.4" r=".7"/><circle cx="3.7" cy="6.6" r=".7"/><circle cx="5.5" cy="10.8" r=".7"/></g></svg>
  <div id="tmid"><div id="ttl">UNREGISTERED</div></div>
  <svg style="position:absolute;left:1052.4px;top:13px" width="20" height="14" viewBox="0 0 20 14"><g stroke="#858585" stroke-width="0.95" stroke-linecap="round"><path d="M4.4 2.4H14.6M6.2 6.6H16.2M8 10.8H18"/></g><g fill="#858585"><circle cx="1.9" cy="2.4" r=".7"/><circle cx="3.7" cy="6.6" r=".7"/><circle cx="5.5" cy="10.8" r=".7"/></g></svg>
 </div>
 <div class="pane" id="pl">
  <div class="path"><span class="n">n</span><span class="p" style="letter-spacing:0.2px">/Users/mehak/Desktop/</span></div>
  <div class="col" style="left:0;width:542.6px"><div class="list" style="top:-63.4px">
<div class="st" style="top:84.12px;height:20.62px"></div>
<div class="st" style="top:125.36px;height:20.62px"></div>
<div class="st" style="top:166.60px;height:20.62px"></div>
<div class="st" style="top:207.84px;height:20.62px"></div>
<div class="st" style="top:249.08px;height:20.62px"></div>
<div class="st" style="top:290.32px;height:20.62px"></div>
<div class="st" style="top:331.56px;height:20.62px"></div>
<div class="st" style="top:372.80px;height:20.62px"></div>
<div class="st" style="top:414.04px;height:20.62px"></div>
<div class="st" style="top:455.28px;height:20.62px"></div>
<div class="st" style="top:496.52px;height:20.62px"></div>
<div class="st" style="top:537.76px;height:20.62px"></div>
<div class="st" style="top:579.00px;height:20.62px"></div>
<div class="st" style="top:620.24px;height:20.62px"></div>
   <div style="position:absolute;left:0;top:62.9px;width:324.4px;height:21.2px;background:#0a00f2"></div>
<div class="c s" style="top:63.50px;left:32.3px;letter-spacing:-0.472px">..</div>
<svg class="ic" style="left:8.0px;top:65.90px"><use href="#i-up"/></svg>
<div class="c d" style="top:84.12px;left:32.3px;letter-spacing:-0.208px">.DS_Store</div>
<svg class="ic" style="left:8.0px;top:87.62px"><use href="#i-doc"/></svg>
<div class="c d" style="top:104.74px;left:32.3px;letter-spacing:0.063px">.localized</div>
<svg class="ic" style="left:8.0px;top:108.24px"><use href="#i-doc"/></svg>
<div class="c" style="top:125.36px;left:32.3px;letter-spacing:0.447px">9108-39502-2-PB.pdf</div>
<svg class="ic" style="left:8.0px;top:128.86px"><use href="#i-pdf"/></svg>
<div class="c" style="top:145.98px;left:32.3px;letter-spacing:0.141px">privatevpn dutch screenshots 2.zip</div>
<svg class="ic" style="left:8.0px;top:149.48px"><use href="#i-zip"/></svg>
<div class="c" style="top:166.60px;left:32.3px;letter-spacing:0.148px">privatevpn dutch screenshots.zip</div>
<svg class="ic" style="left:8.0px;top:170.10px"><use href="#i-zip"/></svg>
<div class="c" style="top:187.22px;left:32.3px;letter-spacing:0.069px">Screen Shot 2022-0...18 at 4.48.38 PM.png</div>
<svg class="ic" style="left:8.0px;top:190.72px"><use href="#i-t0"/></svg>
<div class="c" style="top:207.84px;left:32.3px;letter-spacing:0.078px">Screen Shot 2022-05-18 at 4.49.01 PM.png</div>
<svg class="ic" style="left:8.0px;top:211.34px"><use href="#i-t0"/></svg>
<div class="c" style="top:228.46px;left:32.3px;letter-spacing:0.029px">Screen Shot 2022-0...05 at 5.12.35 PM.png</div>
<svg class="ic" style="left:8.0px;top:231.96px"><use href="#i-t1"/></svg>
<div class="c" style="top:249.08px;left:32.3px;letter-spacing:0.079px">Screen Shot 2022-0...05 at 5.20.32 PM.png</div>
<svg class="ic" style="left:8.0px;top:252.58px"><use href="#i-t2"/></svg>
<div class="c" style="top:269.70px;left:32.3px;letter-spacing:0.094px">Screen Shot 2022-0...05 at 5.23.49 PM.png</div>
<svg class="ic" style="left:8.0px;top:273.20px"><use href="#i-t3"/></svg>
<div class="c" style="top:290.32px;left:32.3px;letter-spacing:0.026px">Screen Shot 2022-0...05 at 5.35.01 PM.png</div>
<svg class="ic" style="left:8.0px;top:293.82px"><use href="#i-t4"/></svg>
<div class="c" style="top:310.94px;left:32.3px;letter-spacing:0.094px">Screen Shot 2022-0...05 at 5.44.42 PM.png</div>
<svg class="ic" style="left:8.0px;top:314.44px"><use href="#i-t5"/></svg>
<div class="c" style="top:331.56px;left:32.3px;letter-spacing:0.054px">Screen Shot 2022-0...05 at 5.47.03 PM.png</div>
<svg class="ic" style="left:8.0px;top:335.06px"><use href="#i-t6"/></svg>
<div class="c" style="top:352.18px;left:32.3px;letter-spacing:0.079px">Screen Shot 2022-0...05 at 5.50.40 PM.png</div>
<svg class="ic" style="left:8.0px;top:355.68px"><use href="#i-t7"/></svg>
<div class="c" style="top:372.80px;left:32.3px;letter-spacing:0.079px">Screen Shot 2022-0...05 at 5.52.35 PM.png</div>
<svg class="ic" style="left:8.0px;top:376.30px"><use href="#i-t8"/></svg>
<div class="c" style="top:393.42px;left:32.3px;letter-spacing:0.094px">Screen Shot 2022-0...05 at 5.54.56 PM.png</div>
<svg class="ic" style="left:8.0px;top:396.92px"><use href="#i-t9"/></svg>
<div class="c" style="top:414.04px;left:32.3px;letter-spacing:0.019px">Screen Shot 2022-08-05 at 6.17.21 PM.png</div>
<svg class="ic" style="left:8.0px;top:417.54px"><use href="#i-t10"/></svg>
<div class="c" style="top:434.66px;left:32.3px;letter-spacing:0.039px">Screen Shot 2022-0...08 at 1.55.59 PM.png</div>
<svg class="ic" style="left:8.0px;top:438.16px"><use href="#i-t11"/></svg>
<div class="c" style="top:455.28px;left:32.3px;letter-spacing:0.055px">Screen Shot 2022-09-14 at 9.11.07 AM.png</div>
<svg class="ic" style="left:8.0px;top:458.78px"><use href="#i-t12"/></svg>
<div class="c" style="top:475.90px;left:32.3px;letter-spacing:0.055px">Screen Shot 2022-09-14 at 9.13.13 AM.png</div>
<svg class="ic" style="left:8.0px;top:479.40px"><use href="#i-t13"/></svg>
<div class="c" style="top:496.52px;left:32.3px;letter-spacing:0.109px">Screen Shot 2022-09-14 at 9.24.13 AM.png</div>
<svg class="ic" style="left:8.0px;top:500.02px"><use href="#i-t14"/></svg>
<div class="c" style="top:517.14px;left:32.3px;letter-spacing:0.019px">Screen Shot 2022-09-15 at 2.37.14 PM.png</div>
<svg class="ic" style="left:8.0px;top:520.64px"><use href="#i-t15"/></svg>
<div class="c" style="top:537.76px;left:32.3px;letter-spacing:0.074px">Screen Shot 2022-0...6 at 10.06.55 AM.png</div>
<svg class="ic" style="left:8.0px;top:541.26px"><use href="#i-t16"/></svg>
<div class="c" style="top:558.38px;left:32.3px;letter-spacing:0.034px">Screen Shot 2022-0...6 at 10.21.43 AM.png</div>
<svg class="ic" style="left:8.0px;top:561.88px"><use href="#i-t17"/></svg>
<div class="c" style="top:579.00px;left:32.3px;letter-spacing:0.014px">Screen Shot 2022-0...27 at 4.18.05 PM.png</div>
<svg class="ic" style="left:8.0px;top:582.50px"><use href="#i-t18"/></svg>
<div class="c" style="top:599.62px;left:32.3px;letter-spacing:0.014px">Screen Shot 2022-0...27 at 4.21.03 PM.png</div>
<svg class="ic" style="left:8.0px;top:603.12px"><use href="#i-t19"/></svg>
<div class="c" style="top:63.50px;left:358.6px;letter-spacing:0.209px">Screen Shot 2022-09-27 at</div>
<svg class="ic" style="left:334.0px;top:67.00px"><use href="#i-u0"/></svg>
<div class="c" style="top:84.12px;left:358.6px;letter-spacing:0.058px">Screen Shot 2022-0...27 at 4.27.02 PM.png</div>
<svg class="ic" style="left:334.0px;top:87.62px"><use href="#i-u1"/></svg>
<div class="c" style="top:104.74px;left:358.6px;letter-spacing:0.058px">Screen Shot 2022-0...27 at 4.28.15 PM.png</div>
<svg class="ic" style="left:334.0px;top:108.24px"><use href="#i-u2"/></svg>
<div class="c" style="top:125.36px;left:358.6px;letter-spacing:0.058px">Screen Shot 2022-0...27 at 4.29.40 PM.png</div>
<svg class="ic" style="left:334.0px;top:128.86px"><use href="#i-u3"/></svg>
<div class="c" style="top:145.98px;left:358.6px;letter-spacing:0.058px">Screen Shot 2022-0...27 at 4.31.09 PM.png</div>
<svg class="ic" style="left:334.0px;top:149.48px"><use href="#i-u4"/></svg>
<div class="c" style="top:166.60px;left:358.6px;letter-spacing:0.058px">Screen Shot 2022-0...27 at 4.33.27 PM.png</div>
<svg class="ic" style="left:334.0px;top:170.10px"><use href="#i-u3"/></svg>
<div class="c" style="top:187.22px;left:358.6px;letter-spacing:0.058px">Screen Shot 2022-0...27 at 4.35.51 PM.png</div>
<svg class="ic" style="left:334.0px;top:190.72px"><use href="#i-u5"/></svg>
<div class="c" style="top:207.84px;left:358.6px;letter-spacing:0.058px">Screen Shot 2022-0...27 at 4.38.16 PM.png</div>
<svg class="ic" style="left:334.0px;top:211.34px"><use href="#i-u6"/></svg>
<div class="c" style="top:228.46px;left:358.6px;letter-spacing:0.125px">Screen Shot 2022-0...30 at</div>
<svg class="ic" style="left:334.0px;top:231.96px"><use href="#i-u7"/></svg>
<div class="c" style="top:249.08px;left:358.6px;letter-spacing:0.139px">Screen Shot 2022-10-02 at</div>
<svg class="ic" style="left:334.0px;top:252.58px"><use href="#i-u8"/></svg>
<div class="c" style="top:269.70px;left:358.6px;letter-spacing:-0.02px">Screen Shot 2022-1...0 at 10.14.25 AM.png</div>
<svg class="ic" style="left:334.0px;top:273.20px"><use href="#i-u9"/></svg>
<div class="c" style="top:290.32px;left:358.6px;letter-spacing:0.002px">Screen Shot 2022-1...20 at 11.40.08 AM.png</div>
<svg class="ic" style="left:334.0px;top:293.82px"><use href="#i-u10"/></svg>
<div class="c" style="top:310.94px;left:358.6px;letter-spacing:-0.02px">Screen Shot 2022-1...0 at 10.51.37 AM.png</div>
<svg class="ic" style="left:334.0px;top:314.44px"><use href="#i-u10"/></svg>
<div class="c" style="top:331.56px;left:358.6px;letter-spacing:0.097px">Screen Shot 2022-10-27 at</div>
<svg class="ic" style="left:334.0px;top:335.06px"><use href="#i-u11"/></svg>
<div class="c" style="top:352.18px;left:358.6px;letter-spacing:0.097px">Screen Shot 2022-10-27 at</div>
<svg class="ic" style="left:334.0px;top:355.68px"><use href="#i-u12"/></svg>
<div class="c" style="top:372.80px;left:358.6px;letter-spacing:-0.051px">Screen Shot 2022-1...27 at 3.04.45 PM.png</div>
<svg class="ic" style="left:334.0px;top:376.30px"><use href="#i-u12"/></svg>
<div class="c" style="top:393.42px;left:358.6px;letter-spacing:0.097px">Screen Shot 2022-10-27 at</div>
<svg class="ic" style="left:334.0px;top:396.92px"><use href="#i-u12"/></svg>
<div class="c" style="top:414.04px;left:358.6px;letter-spacing:-0.051px">Screen Shot 2022-1...27 at 3.09.12 PM.png</div>
<svg class="ic" style="left:334.0px;top:417.54px"><use href="#i-u12"/></svg>
<div class="c" style="top:434.66px;left:358.6px;letter-spacing:0.097px">Screen Shot 2022-10-27 at</div>
<svg class="ic" style="left:334.0px;top:438.16px"><use href="#i-u13"/></svg>
<div class="c" style="top:455.28px;left:358.6px;letter-spacing:0.097px">Screen Shot 2022-10-27 at</div>
<svg class="ic" style="left:334.0px;top:458.78px"><use href="#i-u13"/></svg>
<div class="c" style="top:475.90px;left:358.6px;letter-spacing:0.097px">Screen Shot 2022-10-27 at</div>
<svg class="ic" style="left:334.0px;top:479.40px"><use href="#i-u14"/></svg>
<div class="c" style="top:496.52px;left:358.6px;letter-spacing:0.143px">Screen Shot 2022-10-29 at</div>
<svg class="ic" style="left:334.0px;top:500.02px"><use href="#i-u15"/></svg>
<div class="c" style="top:517.14px;left:358.6px;letter-spacing:0.143px">Screen Shot 2022-10-29 at</div>
<svg class="ic" style="left:334.0px;top:520.64px"><use href="#i-u15"/></svg>
<div class="c" style="top:537.76px;left:358.6px;letter-spacing:0.143px">Screen Shot 2022-10-29 at</div>
<svg class="ic" style="left:334.0px;top:541.26px"><use href="#i-u16"/></svg>
<div class="c" style="top:558.38px;left:358.6px;letter-spacing:0.143px">Screen Shot 2022-10-29 at</div>
<svg class="ic" style="left:334.0px;top:561.88px"><use href="#i-u17"/></svg>
<div class="c" style="top:579.00px;left:358.6px;letter-spacing:-0.018px">Screen Shot 2022-1...30 at 8.12.06 PM.png</div>
<svg class="ic" style="left:334.0px;top:582.50px"><use href="#i-u18"/></svg>
<div class="c" style="top:599.62px;left:358.6px;letter-spacing:-0.018px">Screen Shot 2022-1...30 at 8.15.39 PM.png</div>
<svg class="ic" style="left:334.0px;top:603.12px"><use href="#i-u18"/></svg>
  </div></div>
  <div class="vsep" style="left:324.6px"></div>
  <div class="status" style="background:#fff"><span style="left:7.6px">..</span><span style="left:253.8px;letter-spacing:0.3px">Up</span><span style="left:314.6px;letter-spacing:0.08px">Today at 4:56 PM</span><i style="left:434.6px"></i><span style="left:450.4px;letter-spacing:0.5px">(65)</span><i style="left:497px"></i><span style="left:499.2px;letter-spacing:0.55px">9.3 GB</span></div>
 </div>
 <div id="pdiv"></div>
 <div class="pane" id="pr">
  <div class="path" style="background:#ebebeb"><span class="n">n</span><span class="p" style="letter-spacing:0.1px;left:19px">/Users/mehak/</span></div>
  <div class="col" style="left:0;width:542.6px"><div class="list" style="top:-63.4px">
<div class="st" style="top:84.12px;height:20.62px"></div>
<div class="st" style="top:125.36px;height:20.62px"></div>
<div class="st" style="top:166.60px;height:20.62px"></div>
<div class="st" style="top:207.84px;height:20.62px"></div>
<div class="st" style="top:249.08px;height:20.62px"></div>
<div class="st" style="top:290.32px;height:20.62px"></div>
<div class="st" style="top:331.56px;height:20.62px"></div>
<div class="st" style="top:372.80px;height:20.62px"></div>
<div class="st" style="top:414.04px;height:20.62px"></div>
<div class="st" style="top:455.28px;height:20.62px"></div>
<div class="st" style="top:496.52px;height:20.62px"></div>
<div class="st" style="top:537.76px;height:20.62px"></div>
<div class="st" style="top:579.00px;height:20.62px"></div>
<div class="st" style="top:620.24px;height:20.62px"></div>
   <div style="position:absolute;left:0;top:62.9px;width:177px;height:21.2px;background:#acacac"></div>
<div class="c" style="top:63.50px;left:32.5px;letter-spacing:-0.172px">..</div>
<svg class="ic" style="left:8.0px;top:65.90px"><use href="#i-fhome"/></svg>
<div class="c d" style="top:84.12px;left:32.5px;letter-spacing:-0.088px">.bash_sessions</div>
<svg class="ic" style="left:8.0px;top:86.52px"><use href="#i-f"/></svg>
<div class="c d" style="top:104.74px;left:32.5px;letter-spacing:0.023px">.cups</div>
<svg class="ic" style="left:8.0px;top:107.14px"><use href="#i-f"/></svg>
<div class="c d" style="top:125.36px;left:32.5px;letter-spacing:0.061px">.dropbox</div>
<svg class="ic" style="left:8.0px;top:127.76px"><use href="#i-f"/></svg>
<div class="c" style="top:145.98px;left:32.5px;letter-spacing:0.118px">Applications</div>
<svg class="ic" style="left:8.0px;top:148.38px"><use href="#i-fA"/></svg>
<div class="c" style="top:166.60px;left:32.5px;letter-spacing:0.035px">Desktop</div>
<svg class="ic" style="left:8.0px;top:169.00px"><use href="#i-fD"/></svg>
<div class="c" style="top:187.22px;left:32.5px;letter-spacing:0.038px">Documents</div>
<svg class="ic" style="left:8.0px;top:189.62px"><use href="#i-fDoc"/></svg>
<div class="c" style="top:207.84px;left:32.5px;letter-spacing:-0.059px">Downloads</div>
<svg class="ic" style="left:8.0px;top:210.24px"><use href="#i-fDl"/></svg>
<div class="c" style="top:228.46px;left:32.5px;letter-spacing:-0.036px">Dropbox</div>
<svg class="ic" style="left:8.0px;top:230.86px"><use href="#i-fDb"/></svg>
<div class="c d" style="top:249.08px;left:32.5px;letter-spacing:0.032px">Library</div>
<svg class="ic" style="left:8.0px;top:251.48px"><use href="#i-fL"/></svg>
<div class="c" style="top:269.70px;left:32.5px;letter-spacing:-0.146px">Movies</div>
<svg class="ic" style="left:8.0px;top:272.10px"><use href="#i-fM"/></svg>
<div class="c" style="top:290.32px;left:32.5px;letter-spacing:0.01px">Music</div>
<svg class="ic" style="left:8.0px;top:292.72px"><use href="#i-fMu"/></svg>
<div class="c" style="top:310.94px;left:32.5px;letter-spacing:0.034px">Pictures</div>
<svg class="ic" style="left:8.0px;top:313.34px"><use href="#i-fP"/></svg>
<div class="c" style="top:331.56px;left:32.5px;letter-spacing:-0.023px">Public</div>
<svg class="ic" style="left:8.0px;top:333.96px"><use href="#i-fPu"/></svg>
<div class="c d" style="top:352.18px;left:32.5px;letter-spacing:-0.25px">Trash</div>
<svg class="ic" style="left:8.0px;top:354.58px"><use href="#i-fT"/></svg>
<div class="c d" style="top:372.80px;left:32.5px;letter-spacing:0.112px">.bash_history</div>
<svg class="ic" style="left:8.0px;top:376.30px"><use href="#i-doc"/></svg>
<div class="c d" style="top:393.42px;left:32.5px;letter-spacing:-0.164px">.CFUserTextEncoding</div>
<svg class="ic" style="left:8.0px;top:396.92px"><use href="#i-doc"/></svg>
<div class="c d" style="top:414.04px;left:32.5px;letter-spacing:-0.233px">.DS_Store</div>
<svg class="ic" style="left:8.0px;top:417.54px"><use href="#i-doc"/></svg>
  </div></div>
  <div class="vsep" style="left:177px"></div>
  <div class="status" style="background:#ececec"><span style="left:7.6px">..</span><span style="left:254.8px">Up</span><span style="left:315.6px;letter-spacing:0.08px">Today at 3:25 PM</span><i style="left:434.8px"></i><span style="left:452.6px">(17)</span><i style="left:496.4px"></i><span style="left:499px;letter-spacing:0.55px">9.3 GB</span></div>
 </div>
</div></div>
</body></html>
